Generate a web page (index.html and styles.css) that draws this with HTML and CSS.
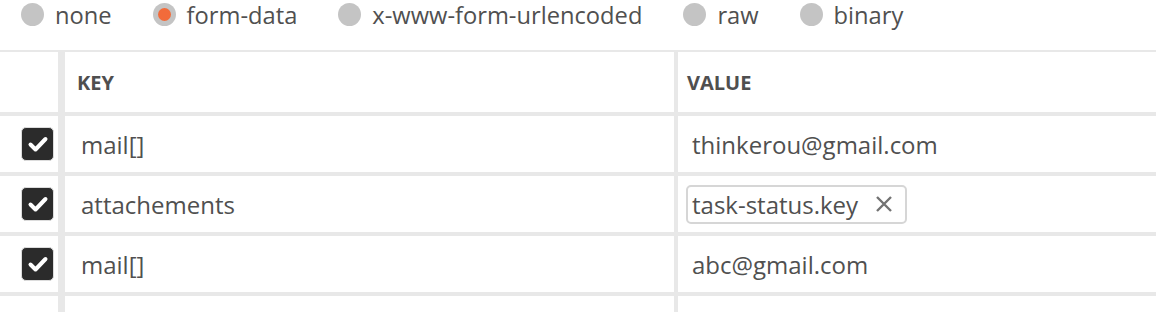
FILE: index.html
```html
<!DOCTYPE html>
<html>
<head>
<meta charset="utf-8">
<link rel="stylesheet" href="styles.css">
</head>
<body>
<div class="modes">
  <label class="mode"><span class="radio"></span><span class="mtext">none</span></label>
  <label class="mode"><span class="radio on"></span><span class="mtext">form-data</span></label>
  <label class="mode"><span class="radio"></span><span class="mtext">x-www-form-urlencoded</span></label>
  <label class="mode"><span class="radio"></span><span class="mtext">raw</span></label>
  <label class="mode"><span class="radio"></span><span class="mtext">binary</span></label>
</div>
<div class="table">
  <div class="row head">
    <div class="c-check"></div>
    <div class="c-key"><span class="th th-key">KEY</span></div>
    <div class="c-val"><span class="th th-val">VALUE</span></div>
  </div>
  <div class="row">
    <div class="c-check"><span class="cb"><svg viewBox="0 0 24 24" width="24" height="24"><path d="M4.5 12.5 L9.5 17.5 L19.5 7" fill="none" stroke="#fff" stroke-width="4" stroke-linecap="round" stroke-linejoin="round"/></svg></span></div>
    <div class="c-key"><span class="txt">mail[]</span></div>
    <div class="c-val"><span class="txt val">thinkerou@gmail.com</span></div>
  </div>
  <div class="row">
    <div class="c-check"><span class="cb"><svg viewBox="0 0 24 24" width="24" height="24"><path d="M4.5 12.5 L9.5 17.5 L19.5 7" fill="none" stroke="#fff" stroke-width="4" stroke-linecap="round" stroke-linejoin="round"/></svg></span></div>
    <div class="c-key"><span class="txt">attachements</span></div>
    <div class="c-val"><span class="chip">task-status.key<svg class="x" viewBox="0 0 18 18" width="18" height="18"><path d="M2 2 L16 16 M16 2 L2 16" stroke="#737373" stroke-width="2.4" fill="none"/></svg></span></div>
  </div>
  <div class="row">
    <div class="c-check"><span class="cb"><svg viewBox="0 0 24 24" width="24" height="24"><path d="M4.5 12.5 L9.5 17.5 L19.5 7" fill="none" stroke="#fff" stroke-width="4" stroke-linecap="round" stroke-linejoin="round"/></svg></span></div>
    <div class="c-key"><span class="txt">mail[]</span></div>
    <div class="c-val"><span class="txt val">abc@gmail.com</span></div>
  </div>
  <div class="row last">
    <div class="c-check"></div>
    <div class="c-key"></div>
    <div class="c-val"></div>
  </div>
</div>
</body>
</html>
```
FILE: styles.css
```css
html, body {
  margin: 0;
  padding: 0;
  background: #fff;
  font-family: "Open Sans", "Liberation Sans", sans-serif;
  color: #505050;
  overflow: hidden;
}
.modes {
  display: flex;
  align-items: center;
  height: 29px;
  padding-left: 21px;
  padding-top: 1px;
  margin-bottom: 20px;
  font-size: 23.7px;
}
.mode {
  display: flex;
  align-items: center;
  margin-right: 41px;
}
.mtext {
  line-height: 29px;
}
.radio {
  width: 23px;
  height: 23px;
  border-radius: 50%;
  background: #c4c4c4;
  margin-right: 11px;
  display: flex;
  align-items: center;
  justify-content: center;
  margin-top: -2px;
}
.radio.on::after {
  content: "";
  width: 13px;
  height: 13px;
  border-radius: 50%;
  background: #f26b3a;
}
.table {
  border-top: 2px solid #e8e8e8;
}
.row {
  display: grid;
  grid-template-columns: 58px 616px 482px;
  height: 56px;
  border-bottom: 4px solid #e8e8e8;
}
.row.head {
  height: 60px;
}
.row.last {
  border-bottom: 0;
}
.c-check {
  display: flex;
  align-items: center;
  justify-content: flex-end;
  padding-right: 4px;
}
.c-key {
  border-left: 7px solid #e8e8e8;
  display: flex;
  align-items: center;
}
.c-val {
  border-left: 4px solid #e8e8e8;
  display: flex;
  align-items: center;
}
.th {
  font-weight: 700;
  font-size: 20px;
  color: #4f4f4f;
  margin-top: 0;
}
.th-key { padding-left: 12px; }
.th-val { padding-left: 9px; }
.txt {
  font-size: 24px;
  padding-left: 16px;
}
.txt.val { padding-left: 14px; }
.cb {
  width: 31px;
  height: 32px;
  background: #2b2b2b;
  border: 1px solid #dcdcdc;
  border-radius: 5px;
  display: flex;
  align-items: center;
  justify-content: center;
}
.chip {
  margin-left: 8px;
  box-sizing: border-box;
  width: 221px;
  height: 39px;
  border: 2px solid #d6d6d6;
  border-radius: 5px;
  display: flex;
  align-items: center;
  padding-left: 4px;
  font-size: 24px;
}
.chip .x {
  margin-left: 17px;
}
```
